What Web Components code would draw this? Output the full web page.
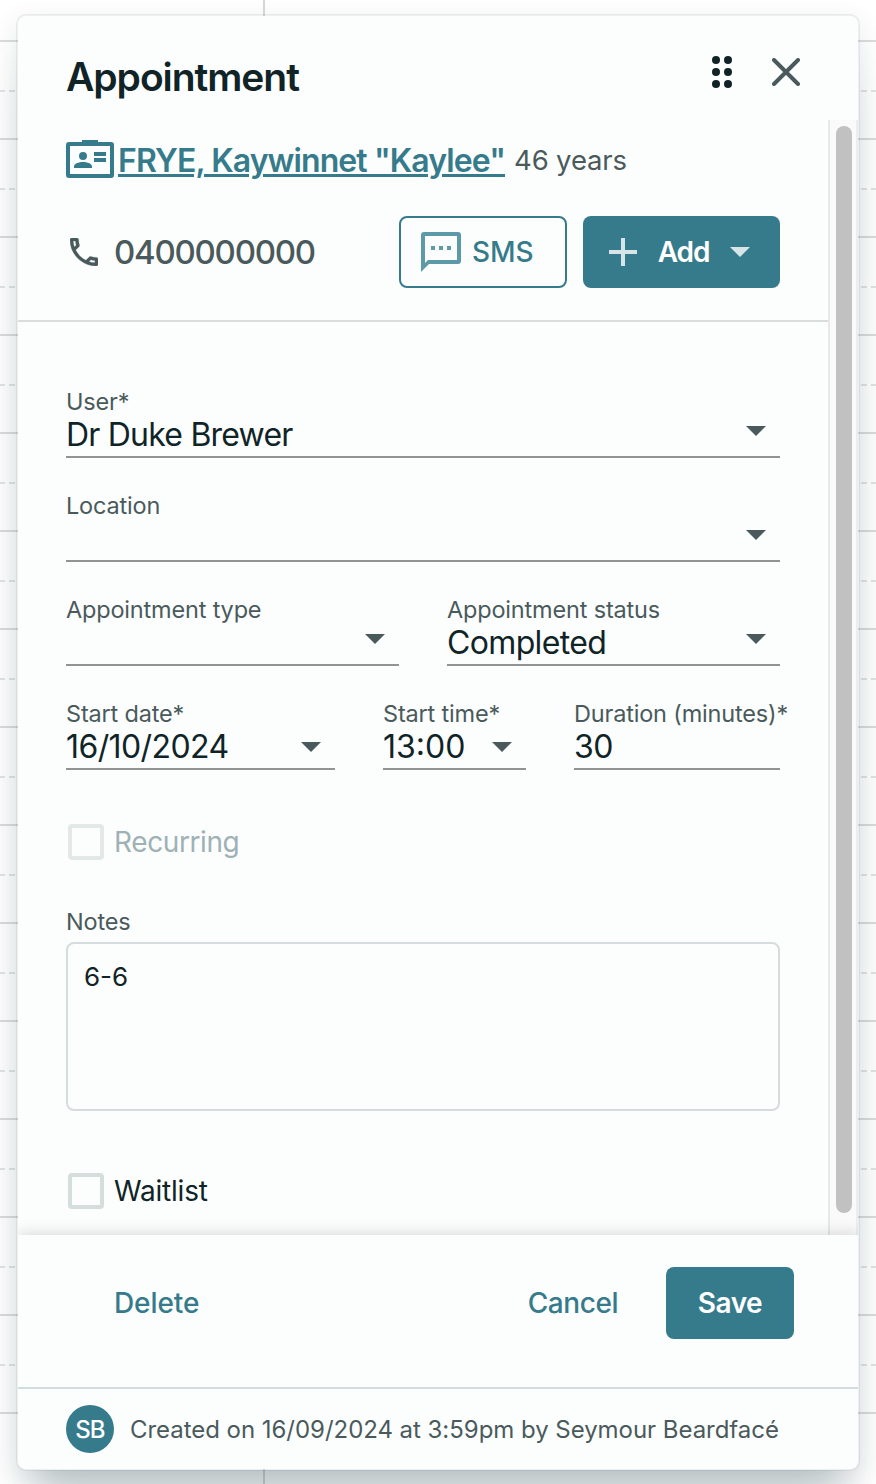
<!DOCTYPE html>
<html lang="en">
<head>
<meta charset="UTF-8">
<title>Appointment</title>
<style>
  html, body {
    margin: 0;
    height: 100%;
  }

  body {
    --teal: #367b8b;
    --ink: #102428;
    --muted: #4a5a5c;
    --surface: #fcfefd;
    --line: #d5dcde;
    position: relative;
    height: 1484px;
    overflow: hidden;
    background: #fff;
    color: var(--ink);
    font-family: Inter, "Liberation Sans", sans-serif;
    font-size: 28px;
  }

  .row {
    display: grid;
    gap: 48px;
  }

  .two { grid-template-columns: 1fr 1fr; }
  .three { grid-template-columns: 269px 143px 206px; }
</style>
</head>
<body>
<calendar-grid></calendar-grid>

<appointment-dialog>
  <dialog-header slot="header">Appointment</dialog-header>

  <patient-summary phone="0400000000">
    <span slot="name">FRYE, Kaywinnet "Kaylee"</span>
    <span slot="age">46 years</span>
    <app-button slot="actions" variant="outlined" style="--width: 168px; --pad: 20px; --gap: 11px; --tracking: -0.1px">
      <app-icon slot="start" name="sms"></app-icon>SMS
    </app-button>
    <app-button slot="actions" variant="filled" style="--width: 197px; --pad: 26px; --gap: 18px; --tracking: -1.1px">
      <app-icon slot="start" name="plus"></app-icon>Add
      <app-icon slot="end" name="caret"></app-icon>
    </app-button>
  </patient-summary>

  <form-fields>
    <form-field label="User*" value="Dr Duke Brewer" kind="select" style="--tracking: -0.78px"></form-field>
    <form-field label="Location" kind="select"></form-field>
    <div class="row two">
      <form-field label="Appointment type" kind="select"></form-field>
      <form-field label="Appointment status" value="Completed" kind="select" style="--tracking: -0.65px"></form-field>
    </div>
    <div class="row three">
      <form-field label="Start date*" value="16/10/2024" kind="picker" style="--tracking: -0.6px"></form-field>
      <form-field label="Start time*" value="13:00" kind="picker" style="--tracking: 0px"></form-field>
      <form-field label="Duration (minutes)*" value="30"></form-field>
    </div>
    <check-box disabled style="margin-top: 22px; --tracking: -0.4px">Recurring</check-box>
    <notes-field label="Notes" style="margin-top: 14px">6-6</notes-field>
    <check-box style="margin-top: 30px">Waitlist</check-box>
  </form-fields>

  <dialog-actions slot="actions">
    <app-button slot="left" variant="text" style="--tracking: -0.1px">Delete</app-button>
    <app-button variant="text" style="--tracking: -0.45px">Cancel</app-button>
    <app-button variant="filled" style="--width: 128px; --pad: 0px; --tracking: -0.5px">Save</app-button>
  </dialog-actions>

  <audit-line slot="audit" initials="SB">Created on 16/09/2024 at 3:59pm by Seymour Beardfacé</audit-line>
</appointment-dialog>

<script>
  // Attaches an open shadow root with the given markup
  class BaseElement extends HTMLElement {
    constructor() {
      super();
      this.attachShadow({ mode: 'open' });
    }

    connectedCallback() {
      const template = document.createElement('template');
      template.innerHTML = this.template();
      this.shadowRoot.replaceChildren(template.content.cloneNode(true));
    }

    attr(name) {
      return this.getAttribute(name) || '';
    }
  }

  const ICONS = {
    drag: [20, 32, '<g fill="#102428"><circle cx="4" cy="4" r="4"/><circle cx="16" cy="4" r="4"/><circle cx="4" cy="16" r="4"/><circle cx="16" cy="16" r="4"/><circle cx="4" cy="28" r="4"/><circle cx="16" cy="28" r="4"/></g>'],
    close: [28, 28, '<path d="M2 2l24 24M26 2L2 26" fill="none" stroke="#4a5a5c" stroke-width="4" stroke-linecap="round"/>'],
    badge: [48, 38, '<path fill="#367b8b" fill-rule="evenodd" d="M16 0h16v2h13a3 3 0 0 1 3 3v30a3 3 0 0 1-3 3H3a3 3 0 0 1-3-3V5a3 3 0 0 1 3-3h13zM4 6v28h40V6zM28 12h12v4H28zM28 18h12v4H28zM17 12a4 4 0 1 1 0 8 4 4 0 0 1 0-8zM8 28v-1.600C8 23.500 13 22 17 22s9 1.500 9 4.400V28z"/>'],
    phone: [28, 28, '<path transform="translate(-4.670 -4.670) scale(1.556)" fill="#4a5a5c" stroke="#4a5a5c" stroke-width="0.200" d="M6.540 5c.060.890.210 1.760.450 2.590l-1.200 1.200c-.410-1.200-.670-2.470-.760-3.790h1.510m9.860 12.020c.850.240 1.720.390 2.600.450v1.490c-1.320-.090-2.590-.350-3.800-.750l1.200-1.190M7.500 3H4c-.550 0-1 .450-1 1 0 9.390 7.610 17 17 17 .550 0 1-.450 1-1v-3.490c0-.550-.450-1-1-1-1.240 0-2.450-.200-3.570-.570-.100-.040-.210-.050-.310-.050-.260 0-.510.100-.710.290l-2.200 2.200c-2.830-1.450-5.150-3.760-6.590-6.590l2.200-2.200c.280-.280.360-.670.250-1.020C8.700 6.450 8.500 5.250 8.500 4c0-.550-.450-1-1-1z"/>'],
    sms: [40, 40, '<path fill="#5c9aaa" fill-rule="evenodd" d="M3 0h34a3 3 0 0 1 3 3v26a3 3 0 0 1-3 3H8l-8 8V3a3 3 0 0 1 3-3zM4 4v27l3-3h29V4zM10 14h4v4h-4zM18 14h4v4h-4zM26 14h4v4h-4z"/>'],
    plus: [28, 28, '<path fill="#d7e5e8" d="M12 0h4v12h12v4H16v12h-4V16H0v-4h12z"/>'],
    caret: [20, 10, '<path fill="currentColor" d="M0 0h20L10 10z"/>']
  };

  class AppIcon extends BaseElement {
    template() {
      const [width, height, body] = ICONS[this.attr('name')];
      return `
        <style>
          :host { display: block; flex: none; }
          svg { display: block; }
        </style>
        <svg width="${width}" height="${height}" viewBox="0 0 ${width} ${height}">${body}</svg>
      `;
    }
  }

  // Calendar slots behind the dialog: solid hour lines, dashed half-hour lines
  class CalendarGrid extends BaseElement {
    template() {
      return `
        <style>
          :host {
            display: grid;
            grid-template-columns: 263px 1fr;
            height: 100%;
          }

          .column {
            --shift: -1px;
            background: repeating-linear-gradient(#dcdcdc 0 2px, transparent 2px 98px) 0 40px no-repeat;
          }

          .column + .column {
            --shift: 6px;
            border-left: 2px solid #d8d8d8;
          }

          .dashes {
            display: grid;
            grid-auto-rows: 2px;
            row-gap: 96px;
            padding-top: 90px;
          }

          i {
            background: repeating-linear-gradient(90deg, #dfe4e4 0 6px, transparent 6px 10px) var(--shift) 0;
          }
        </style>
        <div class="column"><div class="dashes">${'<i></i>'.repeat(14)}</div></div>
        <div class="column"><div class="dashes">${'<i></i>'.repeat(14)}</div></div>
      `;
    }
  }

  class AppointmentDialog extends BaseElement {
    template() {
      return `
        <style>
          :host {
            position: absolute;
            left: 16px;
            top: 14px;
            box-sizing: border-box;
            width: 844px;
            height: 1457px;
            display: flex;
            flex-direction: column;
            border: 2px solid rgba(70, 110, 120, 0.1);
            border-radius: 10px;
            background: var(--surface);
            background-clip: padding-box;
            box-shadow:
              0 42px 40px -18px rgba(16, 50, 60, 0.24),
              0 8px 28px 0 rgba(16, 40, 50, 0.1);
          }

          .scroller {
            flex: none;
            display: grid;
            grid-template-columns: 1fr 30px;
            height: 1115px;
            overflow: hidden;
          }

          .track {
            box-sizing: border-box;
            padding: 6px 4px 22px 6px;
            border-left: 2px solid #e8e8e8;
            border-right: 2px solid #ededed;
            background: #fafafa;
          }

          .thumb {
            height: 100%;
            border-radius: 8px;
            background: #c1c1c1;
          }
        </style>
        <slot name="header"></slot>
        <div class="scroller">
          <div><slot></slot></div>
          <div class="track"><div class="thumb"></div></div>
        </div>
        <slot name="actions"></slot>
        <slot name="audit"></slot>
      `;
    }
  }

  class DialogHeader extends BaseElement {
    template() {
      return `
        <style>
          :host {
            display: flex;
            align-items: center;
            gap: 40px;
            box-sizing: border-box;
            height: 104px;
            flex: none;
            padding: 8px 58px 0 48px;
          }

          h1 {
            flex: 1;
            margin: 0;
            padding-top: 8px;
            font-size: 39px;
            font-weight: 600;
            letter-spacing: -1.05px;
          }
        </style>
        <h1><slot></slot></h1>
        <app-icon name="drag"></app-icon>
        <app-icon name="close"></app-icon>
      `;
    }
  }

  class PatientSummary extends BaseElement {
    template() {
      return `
        <style>
          :host {
            display: block;
            padding: 17px 48px 32px;
            border-bottom: 2px solid #dadddd;
            color: var(--muted);
          }

          .patient, .contact {
            display: flex;
            align-items: center;
          }

          .patient {
            height: 48px;
            margin-bottom: 31px;
          }

          .patient app-icon {
            padding-bottom: 4px;
          }

          a {
            margin: 0 9px 0 4px;
            padding-bottom: 1px;
            color: var(--teal);
            font-size: 32px;
            font-weight: 600;
            letter-spacing: -0.91px;
            white-space: nowrap;
            text-decoration: underline;
            text-decoration-thickness: 3px;
            text-underline-offset: 2px;
          }

          .age {
            padding-bottom: 2px;
            font-size: 27.500px;
            letter-spacing: -0.15px;
          }

          .contact {
            gap: 16px;
            padding-left: 4px;
          }

          .phone {
            flex: 1;
            font-size: 33px;
            font-weight: 500;
            letter-spacing: -1.25px;
          }
        </style>
        <div class="patient">
          <app-icon name="badge"></app-icon>
          <a><slot name="name"></slot></a>
          <span class="age"><slot name="age"></slot></span>
        </div>
        <div class="contact">
          <app-icon name="phone"></app-icon>
          <span class="phone">${this.attr('phone')}</span>
          <slot name="actions"></slot>
        </div>
      `;
    }
  }

  class AppButton extends BaseElement {
    template() {
      return `
        <style>
          :host { display: block; flex: none; }

          button {
            display: flex;
            align-items: center;
            gap: var(--gap, 0);
            box-sizing: border-box;
            width: var(--width, auto);
            height: 72px;
            padding: 0 var(--pad, 48px);
            border: 0;
            border-radius: 8px;
            background: none;
            color: var(--teal);
            font: 550 28px Inter, "Liberation Sans", sans-serif;
            letter-spacing: var(--tracking, -0.3px);
          }

          :host([variant="filled"]) button {
            background: var(--teal);
            color: #fff;
            font-weight: 600;
          }

          :host([variant="outlined"]) button {
            border: 2px solid var(--teal);
          }

          :host([variant="filled"]) span { flex: 1; }

          ::slotted([slot="end"]) {
            color: #d7e5e8;
            margin-right: 4px;
          }
        </style>
        <button>
          <slot name="start"></slot>
          <span><slot></slot></span>
          <slot name="end"></slot>
        </button>
      `;
    }
  }

  class FormFields extends BaseElement {
    template() {
      return `
        <style>
          :host {
            display: flex;
            flex-direction: column;
            gap: 32px;
            padding: 64px 48px 0;
          }
        </style>
        <slot></slot>
      `;
    }
  }

  class FormField extends BaseElement {
    template() {
      const kind = this.attr('kind');
      return `
        <style>
          :host {
            display: block;
            box-sizing: border-box;
            height: 72px;
            min-width: 0;
            border-bottom: 2px solid #929494;
          }

          label {
            display: block;
            color: var(--muted);
            font-size: 23.5px;
            line-height: 31px;
            letter-spacing: -0.18px;
            white-space: nowrap;
          }

          .value {
            display: flex;
            align-items: center;
            justify-content: space-between;
            height: 35px;
            padding-right: 14px;
            font-size: 32px;
            letter-spacing: var(--tracking, -0.5px);
            white-space: nowrap;
          }

          app-icon { color: var(--muted); }

          .select {
            padding-bottom: 7px;
          }
        </style>
        <label>${this.attr('label')}</label>
        <div class="value">
          <span>${this.attr('value')}</span>
          ${kind ? `<app-icon name="caret" class="${kind}"></app-icon>` : ''}
        </div>
      `;
    }
  }

  class CheckBox extends BaseElement {
    template() {
      return `
        <style>
          :host {
            display: flex;
            align-items: center;
            gap: 10px;
            height: 36px;
            padding-left: 2px;
            font-size: 28px;
            letter-spacing: var(--tracking, -0.2px);
          }

          .box {
            box-sizing: border-box;
            width: 36px;
            height: 36px;
            border: 4px solid #d5dddd;
            border-radius: 4px;
          }

          :host([disabled]) { color: #9fb1b5; }
          :host([disabled]) .box { border-color: #e3e9e7; }
        </style>
        <span class="box"></span>
        <span><slot></slot></span>
      `;
    }
  }

  class NotesField extends BaseElement {
    template() {
      return `
        <style>
          :host { display: block; }

          label {
            display: block;
            margin-bottom: 5px;
            color: var(--muted);
            font-size: 23.5px;
            line-height: 31px;
            letter-spacing: -0.2px;
          }

          .text {
            box-sizing: border-box;
            height: 169px;
            padding: 16px;
            border: 2px solid var(--line);
            border-radius: 8px;
            font-size: 26px;
            line-height: 34px;
          }
        </style>
        <label>${this.attr('label')}</label>
        <div class="text"><slot></slot></div>
      `;
    }
  }

  class DialogActions extends BaseElement {
    template() {
      return `
        <style>
          :host {
            position: relative;
            display: flex;
            align-items: flex-start;
            box-sizing: border-box;
            height: 154px;
            flex: none;
            padding: 32px 64px 0 48px;
            border-bottom: 2px solid var(--line);
            background: var(--surface);
            box-shadow: 0 -2px 14px rgba(0, 0, 0, 0.14);
            clip-path: inset(-24px 0 0 0);
          }

          .left { flex: 1; }
        </style>
        <div class="left"><slot name="left"></slot></div>
        <slot></slot>
      `;
    }
  }

  class AuditLine extends BaseElement {
    template() {
      return `
        <style>
          :host {
            display: flex;
            align-items: center;
            gap: 16px;
            flex: 1;
            padding: 0 48px;
            color: var(--muted);
            font-size: 24px;
            letter-spacing: -0.04px;
            white-space: nowrap;
          }

          .avatar {
            display: grid;
            place-items: center;
            width: 48px;
            height: 48px;
            border-radius: 50%;
            background: var(--teal);
            color: #fff;
            font-weight: 500;
            letter-spacing: -1px;
          }
        </style>
        <span class="avatar">${this.attr('initials')}</span>
        <span><slot></slot></span>
      `;
    }
  }

  customElements.define('app-icon', AppIcon);
  customElements.define('calendar-grid', CalendarGrid);
  customElements.define('appointment-dialog', AppointmentDialog);
  customElements.define('dialog-header', DialogHeader);
  customElements.define('patient-summary', PatientSummary);
  customElements.define('app-button', AppButton);
  customElements.define('form-fields', FormFields);
  customElements.define('form-field', FormField);
  customElements.define('check-box', CheckBox);
  customElements.define('notes-field', NotesField);
  customElements.define('dialog-actions', DialogActions);
  customElements.define('audit-line', AuditLine);
</script>
</body>
</html>
